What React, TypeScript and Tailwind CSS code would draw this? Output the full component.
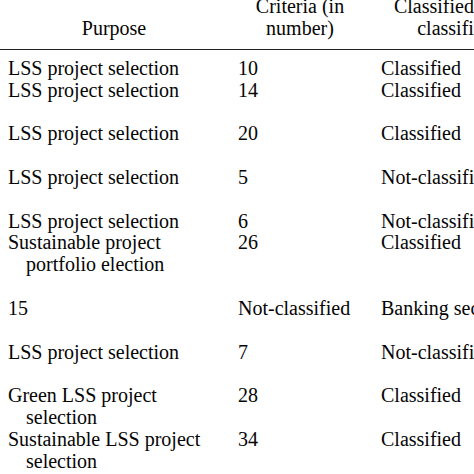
const rows = [
  { purpose: "LSS project selection", criteria: "10", classified: "Classified", lines: 1 },
  { purpose: "LSS project selection", criteria: "14", classified: "Classified", lines: 2 },
  { purpose: "LSS project selection", criteria: "20", classified: "Classified", lines: 2 },
  { purpose: "LSS project selection", criteria: "5", classified: "Not-classified", lines: 2 },
  { purpose: "LSS project selection", criteria: "6", classified: "Not-classified", lines: 1 },
  { purpose: "Sustainable project portfolio election", criteria: "26", classified: "Classified", lines: 3 },
  { purpose: "15", criteria: "Not-classified", classified: "Banking sector", lines: 2 },
  { purpose: "LSS project selection", criteria: "7", classified: "Not-classified", lines: 2 },
  { purpose: "Green LSS project selection", criteria: "28", classified: "Classified", lines: 2 },
  { purpose: "Sustainable LSS project selection", criteria: "34", classified: "Classified", lines: 2 },
];

const rowHeight: Record<number, string> = {
  1: "h-[21.85px]",
  2: "h-[43.7px]",
  3: "h-[65.55px]",
};

export default function App() {
  return (
    <div
      className="h-[474px] w-[474px] overflow-hidden bg-white text-[20px] leading-[21.85px] text-[#050505]"
      style={{ fontFamily: '"Liberation Serif", "Times New Roman", serif' }}
    >
      <div className="w-[529px]">
        {/* header */}
        <div className="mt-[-4px] grid grid-cols-[238px_143px_148px] items-end border-b-[1.5px] border-[#222] pb-[9px]">
          <div className="pl-[8px] pr-[18px] text-center">Purpose</div>
          <div className="pr-[19px] text-center">Criteria (in number)</div>
          <div className="text-center">Classified/Not-classified</div>
        </div>

        {/* body */}
        <div className="pt-[8px]">
          {rows.map((row, i) => (
            <div key={i} className={`grid grid-cols-[238px_143px_148px] items-start ${rowHeight[row.lines]}`}>
              <div className="pl-[26px] pr-[18px] indent-[-18px]">{row.purpose}</div>
              <div className="whitespace-nowrap">{row.criteria}</div>
              <div className="whitespace-nowrap">{row.classified}</div>
            </div>
          ))}
        </div>
      </div>
    </div>
  );
}
